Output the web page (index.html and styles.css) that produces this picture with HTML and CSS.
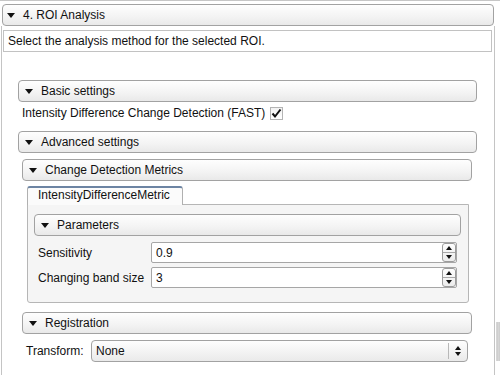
FILE: index.html
```html
<!DOCTYPE html>
<html>
<head>
<meta charset="utf-8">
<link rel="stylesheet" href="styles.css">
</head>
<body>
<div class="topline"></div>
<div class="frame">
  <div class="main">
    <div class="ctk top"><span class="tri"></span><span>4. ROI Analysis</span></div>
    <div class="panel">
      <div class="desc">Select the analysis method for the selected ROI.</div>
      <div class="inner">
        <div class="ctk basic"><span class="tri"></span><span>Basic settings</span></div>
        <div class="checkrow">
          <span>Intensity Difference Change Detection (FAST)</span>
          <span class="check"><svg width="11" height="11" viewBox="0 0 11 11"><path d="M1.5 5.5 L4 8.5 L9.5 1.5" fill="none" stroke="#111" stroke-width="2"/></svg></span>
        </div>
        <div class="ctk adv"><span class="tri"></span><span>Advanced settings</span></div>
        <div class="advbody">
          <div class="ctk cdm"><span class="tri"></span><span>Change Detection Metrics</span></div>
          <div class="cdmbody">
            <div class="tabbar"><div class="tab">IntensityDifferenceMetric</div></div>
            <div class="pane">
              <div class="ctk params"><span class="tri"></span><span>Parameters</span></div>
              <div class="paramgrid">
                <span class="lbl">Sensitivity</span>
                <div class="spin"><span class="val">0.9</span><span class="btns"><span class="up"></span><span class="dn"></span></span></div>
                <span class="lbl">Changing band size</span>
                <div class="spin"><span class="val">3</span><span class="btns"><span class="up"></span><span class="dn"></span></span></div>
              </div>
            </div>
          </div>
          <div class="ctk reg"><span class="tri"></span><span>Registration</span></div>
          <div class="reggrid">
            <span class="lbl">Transform:</span>
            <div class="combo"><span class="val">None</span><span class="sep"></span><span class="arrows"><span class="up"></span><span class="dn"></span></span></div>
          </div>
        </div>
      </div>
    </div>
  </div>
  <div class="scroll"><div class="thumb"></div></div>
</div>
</body>
</html>
```
FILE: styles.css
```css
html, body {
  margin: 0;
  padding: 0;
}
body {
  width: 500px;
  height: 375px;
  overflow: hidden;
  background: #ffffff;
  font-family: "Liberation Sans", Arial, sans-serif;
  font-size: 12px;
  color: #111;
}
.topline {
  height: 1px;
  background: #c6c6c6;
}
.frame {
  display: flex;
}
.main {
  width: 495px;
  padding-top: 3px;
}
.scroll {
  width: 5px;
}
.thumb {
  margin-top: 321px;
  margin-left: 1px;
  width: 4px;
  height: 39px;
  background: repeating-linear-gradient(90deg, #d6d6d6 0 1px, #cfcfcf 1px 2px);
}
.ctk {
  box-sizing: border-box;
  height: 22px;
  border: 1px solid #a2a2a2;
  border-radius: 4px;
  background: linear-gradient(#fefefe, #f3f3f3 60%, #e9e9e9);
  display: flex;
  align-items: center;
  line-height: 16px;
}
.tri {
  width: 0;
  height: 0;
  border-left: 4px solid transparent;
  border-right: 4px solid transparent;
  border-top: 5px solid #111;
  margin-left: 6px;
  margin-right: 8px;
}
.top {
  margin-left: 2px;
  width: 492px;
}
.top .tri {
  border-left-width: 4.5px;
  border-right-width: 4.5px;
  margin-left: 4px;
  margin-right: 8px;
}
.panel {
  margin-left: 1px;
  width: 494px;
  box-sizing: border-box;
  border-left: 1px solid #c4c4c4;
  border-right: 1px solid #c4c4c4;
  height: 360px;
  padding-top: 4px;
}
.desc {
  box-sizing: border-box;
  margin-left: 1px;
  width: 489px;
  height: 22px;
  border: 1px solid #c2c2c2;
  padding-left: 4px;
  line-height: 20px;
}
.inner {
  margin-left: 16px;
  width: 459px;
  padding-top: 28px;
}
.checkrow {
  display: flex;
  align-items: center;
  height: 16px;
  margin-top: 3px;
  padding-left: 4px;
}
.check {
  box-sizing: border-box;
  width: 13px;
  height: 13px;
  margin-left: 5px;
  border: 1px solid #b4b4b4;
  background: linear-gradient(#f2f2f2, #ffffff);
  display: flex;
  align-items: center;
  justify-content: center;
}
.check svg {
  display: block;
}
.adv {
  margin-top: 10px;
}
.advbody {
  padding: 6px 5px 0 4px;
}
.cdmbody {
  padding: 5px 3px 0 5px;
}
.tabbar {
  display: flex;
  height: 18px;
}
.tab {
  box-sizing: border-box;
  width: 156px;
  height: 19px;
  border: 1px solid #b0b0b0;
  border-top: 2px solid #6c84a3;
  border-bottom: none;
  border-radius: 3px 3px 0 0;
  background: #fbfbfb;
  padding-left: 10px;
  line-height: 15px;
  position: relative;
  z-index: 1;
}
.pane {
  box-sizing: border-box;
  height: 99px;
  border: 1px solid #b6b6b6;
  border-radius: 0 0 3px 3px;
  background: #f5f5f5;
  padding: 9px 7px 0 6px;
}
.paramgrid {
  display: grid;
  grid-template-columns: 113px 1fr;
  row-gap: 4px;
  margin-top: 6px;
  padding: 0 4px 0 4px;
  align-items: center;
}
.lbl {
  line-height: 16px;
}
.spin {
  box-sizing: border-box;
  height: 21px;
  border: 1px solid #a6a6a6;
  border-radius: 2px;
  background: #fff;
  display: flex;
  align-items: center;
}
.spin .val, .combo .val {
  flex: 1;
  padding-left: 4px;
  line-height: 16px;
}
.btns {
  box-sizing: border-box;
  width: 14px;
  height: 19px;
  margin-right: 0;
  border: 1px solid #9c9c9c;
  border-radius: 3px;
  background: linear-gradient(#fdfdfd, #ececec);
  display: flex;
  flex-direction: column;
}
.btns .up, .btns .dn {
  flex: 1;
  display: flex;
  align-items: center;
  justify-content: center;
}
.btns .up {
  border-bottom: 1px solid #a8a8a8;
}
.up::after {
  content: "";
  border-left: 3.5px solid transparent;
  border-right: 3.5px solid transparent;
  border-bottom: 4px solid #111;
}
.dn::after {
  content: "";
  border-left: 3.5px solid transparent;
  border-right: 3.5px solid transparent;
  border-top: 4px solid #111;
}
.reg {
  margin-top: 9px;
}
.reggrid {
  display: grid;
  grid-template-columns: 65px 1fr;
  margin-top: 6px;
  padding: 0 4px 0 4px;
  align-items: center;
}
.combo {
  box-sizing: border-box;
  height: 22px;
  border: 1px solid #a2a2a2;
  border-radius: 4px;
  background: linear-gradient(#fefefe, #f2f2f2 60%, #eaeaea);
  display: flex;
  align-items: center;
}
.combo .sep {
  width: 1px;
  height: 16px;
  background: #b8b8b8;
}
.combo .arrows {
  width: 18px;
  display: flex;
  flex-direction: column;
  align-items: center;
  gap: 2px;
}
.arrows .up, .arrows .dn {
  display: flex;
}
.arrows .up::after, .arrows .dn::after {
  border-left-width: 3.5px;
  border-right-width: 3.5px;
}
```
